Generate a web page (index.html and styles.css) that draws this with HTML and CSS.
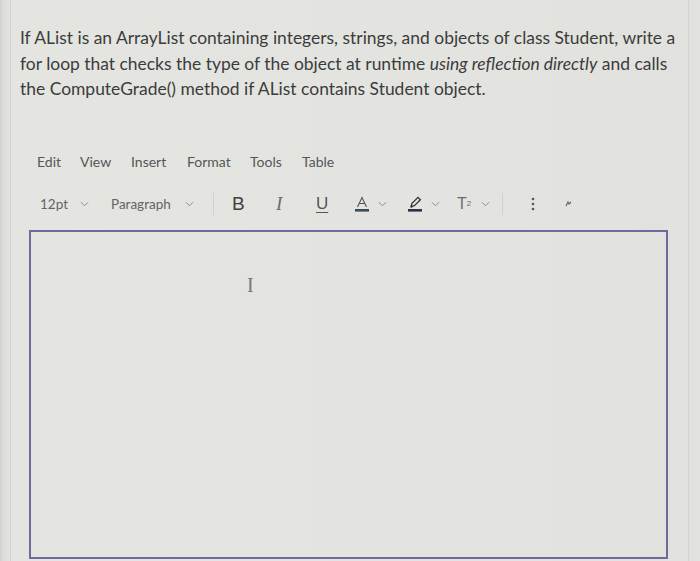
FILE: index.html
```html
<!DOCTYPE html>
<html>
<head>
<meta charset="utf-8">
<link rel="stylesheet" href="styles.css">
</head>
<body>
<div class="page">
  <div class="edge-left"></div>
  <div class="content">
    <p class="question">If AList is an ArrayList containing integers, strings, and objects of class Student, write a for loop that checks the type of the object at runtime <em>using reflection directly</em> and calls the ComputeGrade() method if AList contains Student object.</p>
    <nav class="menu">
      <span class="m-edit">Edit</span>
      <span class="m-view">View</span>
      <span class="m-insert">Insert</span>
      <span class="m-format">Format</span>
      <span class="m-tools">Tools</span>
      <span class="m-table">Table</span>
    </nav>
    <div class="toolbar">
      <span class="dd size">12pt <svg class="chev" viewBox="0 0 10 6"><path d="M1 1l4 4 4-4"/></svg></span>
      <span class="dd para">Paragraph <svg class="chev" viewBox="0 0 10 6"><path d="M1 1l4 4 4-4"/></svg></span>
      <span class="sep"></span>
      <span class="btn bold">B</span>
      <span class="btn ital">I</span>
      <span class="btn under">U</span>
      <span class="btn color"><svg width="16" height="16" viewBox="0 0 16 16"><path d="M3.5 11L8 1.5 12.5 11M5.2 7.5h5.6" fill="none" stroke="#555" stroke-width="1.1"/><rect x="1" y="13" width="14" height="2.6" fill="#3d4c5a"/></svg><svg class="chev" viewBox="0 0 10 6"><path d="M1 1l4 4 4-4"/></svg></span>
      <span class="btn hl"><svg width="16" height="16" viewBox="0 0 16 16"><path d="M4 10.5l1-3.2 6-6 2.4 2.4-6 6z" fill="none" stroke="#333" stroke-width="1.3"/><path d="M4 10.5l1.3 0.9" stroke="#333" stroke-width="1.3"/><rect x="1" y="13" width="14" height="2.6" fill="#2b3440"/></svg><svg class="chev" viewBox="0 0 10 6"><path d="M1 1l4 4 4-4"/></svg></span>
      <span class="btn sup">T<sup>2</sup><svg class="chev" viewBox="0 0 10 6"><path d="M1 1l4 4 4-4"/></svg></span>
      <span class="sep sep2"></span>
      <span class="btn more"><svg width="4" height="16" viewBox="0 0 4 16"><circle cx="2" cy="3" r="1.3"/><circle cx="2" cy="8" r="1.3"/><circle cx="2" cy="13" r="1.3"/></svg></span>
      <span class="btn small"><svg width="8" height="8" viewBox="0 0 8 8"><path d="M1 6l2-4 1 2 2-2" fill="none" stroke="#666" stroke-width="1.2"/></svg></span>
    </div>
    <div class="editor">
      <span class="ibeam">I</span>
    </div>
  </div>
  <div class="edge-right"></div>
</div>
</body>
</html>
```
FILE: styles.css
```css
html, body {
  margin: 0;
  padding: 0;
  width: 700px;
  height: 561px;
  overflow: hidden;
  background: #e3e4df;
}
.page {
  position: relative;
  display: flex;
  width: 700px;
  height: 561px;
  font-family: Lato, "Liberation Sans", sans-serif;
  background: linear-gradient(90deg, #cfd0cb 0, #dcddd8 3px, #e4e5e0 12px, #e3e4df 60%, #e1e2dd 100%);
}
.edge-left {
  position: absolute;
  left: 10px;
  top: 0;
  bottom: 0;
  width: 1px;
  background: #d2d3ce;
}
.edge-right {
  position: absolute;
  left: 688px;
  top: 0;
  bottom: 0;
  width: 1px;
  background: #d3d4cf;
}
.content {
  flex: 1;
  display: flex;
  flex-direction: column;
}
.question {
  margin: 25px 0 0 20px;
  width: 670px;
  font-size: 17.45px;
  line-height: 25.5px;
  color: #3b3c3c;
}
.question em {
  font-style: italic;
}
.menu {
  display: flex;
  margin: 49px 0 0 37px;
  font-size: 14px;
  color: #555657;
  height: 22px;
  align-items: center;
}
.m-edit { width: 43px; }
.m-view { width: 51px; }
.m-insert { width: 56px; }
.m-format { width: 63px; }
.m-tools { width: 52px; }
.toolbar {
  display: flex;
  align-items: center;
  margin: 19px 0 0 40px;
  height: 24px;
  color: #636465;
  font-size: 13.5px;
}
.chev {
  width: 9px;
  height: 6px;
  fill: none;
  stroke: #8c8d8e;
  stroke-width: 1.1;
}
.dd { display: flex; align-items: center; }
.size { width: 71px; }
.size .chev { margin-left: 12px; }
.para { width: 102px; }
.para .chev { margin-left: 14px; }
.sep {
  width: 1px;
  height: 22px;
  background: #d0d1cc;
  margin-right: 18px;
}
.btn { display: flex; align-items: center; }
.btn .chev { margin-left: 8px; }
.bold {
  font-family: "Liberation Sans", sans-serif;
  font-size: 19px;
  color: #3e3f40;
  width: 44px;
}
.ital {
  font-family: "Liberation Serif", serif;
  font-style: italic;
  font-size: 19px;
  color: #6b6c6d;
  width: 40px;
}
.under {
  font-family: "Liberation Sans", sans-serif;
  font-size: 17px;
  color: #555;
  text-decoration: underline;
  text-underline-offset: 3px;
  width: 38px;
}
.color { width: 53px; }
.hl { width: 50px; }
.sup {
  font-family: "Liberation Sans", sans-serif;
  font-size: 16px;
  color: #6a6b6c;
  width: 45px;
}
.sup sup { font-size: 8px; margin-right: 2px; }
.sep2 { margin-right: 28px; }
.more { width: 34px; fill: #555; }
.small { width: 10px; }
.editor {
  position: relative;
  margin: 14px 0 0 29px;
  width: 639px;
  height: 329px;
  border: 2px solid #6c6b9b;
  box-sizing: border-box;
}
.ibeam {
  position: absolute;
  left: 216px;
  top: 42px;
  font-family: "Liberation Serif", serif;
  font-size: 20px;
  color: #777;
}
```
